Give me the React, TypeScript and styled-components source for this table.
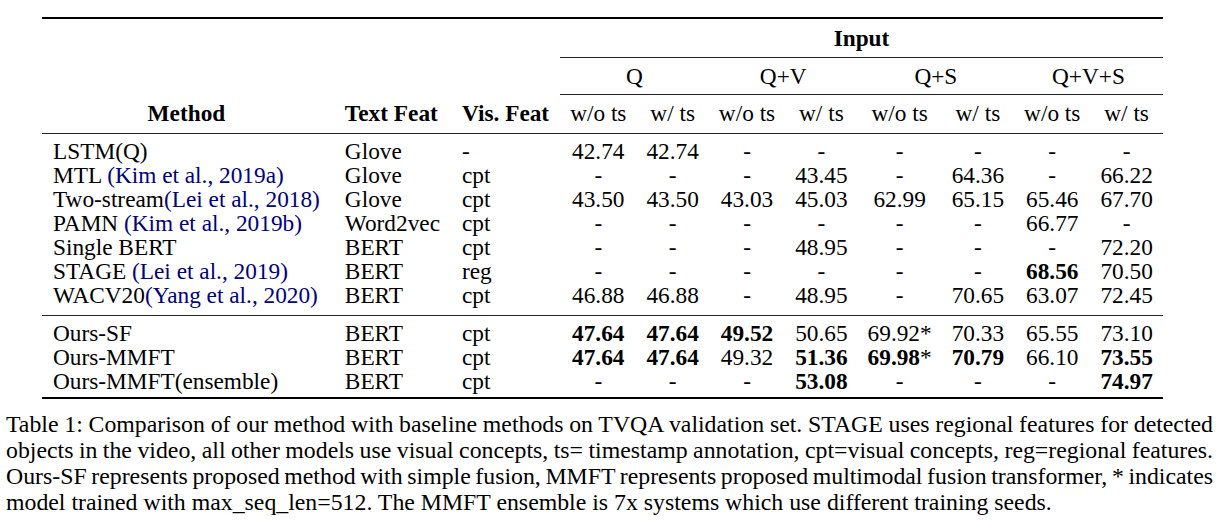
import styled, { createGlobalStyle } from "styled-components";

const GlobalStyle = createGlobalStyle`
  html, body {
    margin: 0;
    padding: 0;
    background: #fff;
  }
  body {
    font-family: "Liberation Serif", "Times New Roman", serif;
    color: #000;
  }
`;

const Page = styled.div`
  width: 1218px;
  height: 521px;
  overflow: hidden;
  padding-top: 17px;
  box-sizing: border-box;
  font-family: "Liberation Serif", "Times New Roman", serif;
`;

const Table = styled.table`
  margin-left: 42px;
  border-collapse: collapse;
  font-family: inherit;
  font-size: 23.3px;
  line-height: 24px;
`;

const Head = styled.thead`
  border-top: 2px solid #000;
  border-bottom: 1px solid #222;
`;

const Group = styled.tbody<{ $closing?: boolean }>`
  border-bottom: ${(p) => (p.$closing ? "2px solid #000" : "1px solid #222")};
`;

// row padding is passed down to its cells through variables
const Row = styled.tr<{ $pt?: number; $pb?: number }>`
  --pt: ${(p) => p.$pt ?? 0}px;
  --pb: ${(p) => p.$pb ?? 0}px;
`;

const ColHead = styled.th<{ $align?: "left" | "center" }>`
  padding: 0 11px 8px;
  font-weight: bold;
  text-align: ${(p) => p.$align ?? "left"};
  vertical-align: bottom;
  white-space: nowrap;

  &:first-child {
    padding-right: 14px;
  }
`;

const GroupHead = styled.th<{ $strong?: boolean }>`
  padding: var(--pt) 10px var(--pb);
  font-weight: ${(p) => (p.$strong ? "bold" : "normal")};
  text-align: center;
  border-bottom: 1px solid #222;
  white-space: nowrap;
`;

const SubHead = styled.th`
  padding: var(--pt) 10px var(--pb);
  font-weight: normal;
  text-align: center;
  white-space: nowrap;
`;

const Name = styled.td`
  padding: var(--pt) 11px var(--pb);
  text-align: left;
  white-space: nowrap;

  &:first-child {
    padding-right: 14px;
  }
`;

const Score = styled.td<{ $best?: boolean }>`
  padding: var(--pt) 10px var(--pb);
  text-align: center;
  white-space: nowrap;
  font-weight: ${(p) => (p.$best ? "bold" : "normal")};
`;

const Star = styled.span`
  font-weight: normal;
`;

const Cite = styled.span`
  color: #000080;
`;

const Caption = styled.div`
  margin-top: 12px;
  margin-left: 6px;
  width: 1207px;
  font-size: 23.8px;
  line-height: 26px;
`;

// full lines are set tight and then stretched to the measure, like LaTeX
const CaptionLine = styled.span<{ $last?: boolean }>`
  display: block;
  white-space: nowrap;
  text-align: justify;
  text-align-last: ${(p) => (p.$last ? "left" : "justify")};
  word-spacing: ${(p) => (p.$last ? "0" : "-2px")};
`;

type Entry = {
  name: string;
  cite?: string;
  text: string;
  vis: string;
  scores: string[];
};

// "!" marks a best (bold) score
const baselines: Entry[] = [
  { name: "LSTM(Q)", text: "Glove", vis: "-", scores: ["42.74", "42.74", "-", "-", "-", "-", "-", "-"] },
  { name: "MTL ", cite: "(Kim et al., 2019a)", text: "Glove", vis: "cpt", scores: ["-", "-", "-", "43.45", "-", "64.36", "-", "66.22"] },
  { name: "Two-stream", cite: "(Lei et al., 2018)", text: "Glove", vis: "cpt", scores: ["43.50", "43.50", "43.03", "45.03", "62.99", "65.15", "65.46", "67.70"] },
  { name: "PAMN ", cite: "(Kim et al., 2019b)", text: "Word2vec", vis: "cpt", scores: ["-", "-", "-", "-", "-", "-", "66.77", "-"] },
  { name: "Single BERT", text: "BERT", vis: "cpt", scores: ["-", "-", "-", "48.95", "-", "-", "-", "72.20"] },
  { name: "STAGE ", cite: "(Lei et al., 2019)", text: "BERT", vis: "reg", scores: ["-", "-", "-", "-", "-", "-", "!68.56", "70.50"] },
  { name: "WACV20", cite: "(Yang et al., 2020)", text: "BERT", vis: "cpt", scores: ["46.88", "46.88", "-", "48.95", "-", "70.65", "63.07", "72.45"] },
];

const ours: Entry[] = [
  { name: "Ours-SF", text: "BERT", vis: "cpt", scores: ["!47.64", "!47.64", "!49.52", "50.65", "69.92*", "70.33", "65.55", "73.10"] },
  { name: "Ours-MMFT", text: "BERT", vis: "cpt", scores: ["!47.64", "!47.64", "49.32", "!51.36", "!69.98*", "!70.79", "66.10", "!73.55"] },
  { name: "Ours-MMFT(ensemble)", text: "BERT", vis: "cpt", scores: ["-", "-", "-", "!53.08", "-", "-", "-", "!74.97"] },
];

const inputs = ["Q", "Q+V", "Q+S", "Q+V+S"];

const ScoreCell = ({ value }: { value: string }) => {
  const best = value.startsWith("!");
  const raw = best ? value.slice(1) : value;
  const starred = raw.endsWith("*");
  const num = starred ? raw.slice(0, -1) : raw;
  return (
    <Score $best={best}>
      {num}
      {starred && <Star>*</Star>}
    </Score>
  );
};

const EntryRow = ({ e, pt, pb }: { e: Entry; pt?: number; pb?: number }) => (
  <Row $pt={pt} $pb={pb}>
    <Name>
      {e.name}
      {e.cite && <Cite>{e.cite}</Cite>}
    </Name>
    <Name>{e.text}</Name>
    <Name>{e.vis}</Name>
    {e.scores.map((s, i) => (
      <ScoreCell key={i} value={s} />
    ))}
  </Row>
);

const App = () => {
  return (
    <Page>
      <GlobalStyle />
      <Table>
        <Head>
          <Row $pt={7} $pb={7}>
            <ColHead rowSpan={3} $align="center">Method</ColHead>
            <ColHead rowSpan={3}>Text Feat</ColHead>
            <ColHead rowSpan={3}>Vis. Feat</ColHead>
            <GroupHead colSpan={8} $strong>Input</GroupHead>
          </Row>
          <Row $pt={6} $pb={6}>
            {inputs.map((k) => (
              <GroupHead key={k} colSpan={2}>{k}</GroupHead>
            ))}
          </Row>
          <Row $pt={6} $pb={8}>
            {inputs.map((k) => [
              <SubHead key={k + "a"}>w/o ts</SubHead>,
              <SubHead key={k + "b"}>w/ ts</SubHead>,
            ])}
          </Row>
        </Head>
        <Group>
          {baselines.map((e, i) => (
            <EntryRow
              key={e.name}
              e={e}
              pt={i === 0 ? 5 : 0}
              pb={i === baselines.length - 1 ? 8 : 0}
            />
          ))}
        </Group>
        <Group $closing>
          {ours.map((e, i) => (
            <EntryRow
              key={e.name}
              e={e}
              pt={i === 0 ? 5 : 0}
              pb={i === ours.length - 1 ? 4 : 0}
            />
          ))}
        </Group>
      </Table>
      <Caption>
        <CaptionLine>
          Table 1: Comparison of our method with baseline methods on TVQA validation set. STAGE uses regional features for detected
        </CaptionLine>
        <CaptionLine>
          objects in the video, all other models use visual concepts, ts= timestamp annotation, cpt=visual concepts, reg=regional features.
        </CaptionLine>
        <CaptionLine>
          Ours-SF represents proposed method with simple fusion, MMFT represents proposed multimodal fusion transformer, * indicates
        </CaptionLine>
        <CaptionLine $last>
          model trained with max_seq_len=512. The MMFT ensemble is 7x systems which use different training seeds.
        </CaptionLine>
      </Caption>
    </Page>
  );
};

export default App;
